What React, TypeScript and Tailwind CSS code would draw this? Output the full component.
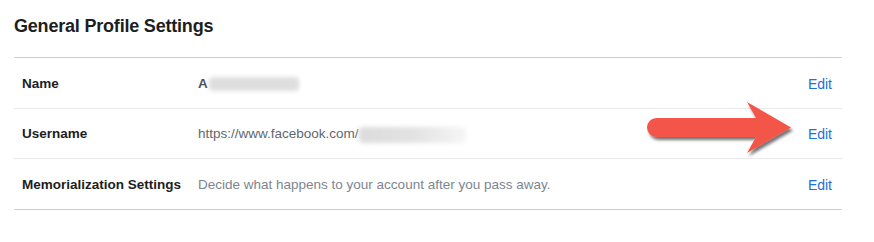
import React from "react";

type Row = {
  label: string;
  value: React.ReactNode;
};

function Blur({ className }: { className: string }) {
  return <span className={`inline-block align-middle rounded-sm blur-[2px] ${className}`} />;
}

const rows: Row[] = [
  {
    label: "Name",
    value: (
      <span className="flex items-center text-[#4b4f56]">
        <span className="font-bold">A</span>
        <Blur className="ml-[1px] w-[90px] h-[14px] bg-[#dedede]" />
      </span>
    ),
  },
  {
    label: "Username",
    value: (
      <span className="flex items-center text-[#606770]">
        https://www.facebook.com/
        <Blur className="w-[107px] h-[16px] bg-gradient-to-r from-[#dcdcdc] via-[#e2e2e2] to-[#f6f6f6]" />
      </span>
    ),
  },
  {
    label: "Memorialization Settings",
    value: <span className="text-[#7d8590]">Decide what happens to your account after you pass away.</span>,
  },
];

function Arrow() {
  return (
    <svg
      className="absolute left-[640px] top-[95px] pointer-events-none"
      width="164"
      height="68"
      viewBox="0 0 164 68"
    >
      <defs>
        <filter id="arrowShadow" x="-10%" y="-20%" width="130%" height="150%">
          <feDropShadow dx="2" dy="3" stdDeviation="1.8" floodColor="#000" floodOpacity="0.55" />
        </filter>
      </defs>
      <path
        d="M16.5 23 L116 23 L107 7 L151 32.5 L107 58 L116 42 L16.5 42 A9.5 9.5 0 0 1 16.5 23 Z"
        fill="#f4554a"
        filter="url(#arrowShadow)"
      />
    </svg>
  );
}

export default function App() {
  return (
    <div className="relative w-[874px] h-[242px] bg-white font-['Liberation_Sans',Arial,sans-serif] overflow-hidden">
      <div className="pt-[14px] px-[14px] w-[856px]">
        <h2 className="text-[18px] leading-[24px] font-bold tracking-[-0.2px] text-[#1c1e21]">
          General Profile Settings
        </h2>
        <div className="mt-[19px] border-t border-b border-[#cccccc]">
          {rows.map((row, i) => (
            <div
              key={row.label}
              className={`flex items-center pl-[8px] pr-[10px] pt-[2px] text-[13.5px] ${
                i > 0 ? "border-t border-[#e9eaed]" : ""
              } ${i === rows.length - 1 ? "h-[51px]" : "h-[50px]"}`}
            >
              <div className="w-[176px] shrink-0 font-bold text-[#1c1e21]">{row.label}</div>
              <div className="flex-1">{row.value}</div>
              <a className="text-[#216fdb] text-[14px] cursor-pointer">Edit</a>
            </div>
          ))}
        </div>
      </div>
      <Arrow />
    </div>
  );
}
